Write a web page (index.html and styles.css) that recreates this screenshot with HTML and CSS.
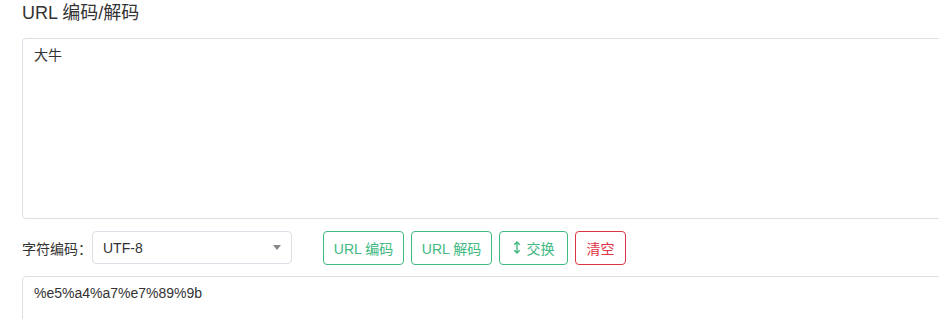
FILE: index.html
```html
<!DOCTYPE html>
<html>
<head>
    <title>URL 编码/解码</title>
    <link rel="stylesheet" href="styles.css">
</head>
<body>
    <div class="tool">
        <h2 class="title">URL 编码/解码</h2>
        <textarea class="box box-input" id="src">大牛</textarea>

        <div class="toolbar">
            <label class="label">字符编码：</label>
            <div class="select">
                <span>UTF-8</span>
                <i class="caret"></i>
            </div>
            <div class="actions">
                <button class="btn btn-wide">URL 编码</button>
                <button class="btn btn-wide">URL 解码</button>
                <button class="btn btn-swap">
                    <svg width="8" height="13" viewBox="0 0 8 13" fill="none" stroke="currentColor" stroke-width="1.4">
                        <path d="M4 1v11M1.2 3.8L4 1l2.8 2.8M1.2 9.2L4 12l2.8-2.8"/>
                    </svg>
                    交换
                </button>
                <button class="btn btn-danger">清空</button>
            </div>
        </div>

        <textarea class="box box-output" id="dst">%e5%a4%a7%e7%89%9b</textarea>
    </div>
</body>
</html>
```

FILE: styles.css
```css
* {
    margin: 0;
    padding: 0;
    box-sizing: border-box;
}

html, body {
    overflow: hidden;
}

body {
    background: #fff;
    color: #333;
    font-family: "Liberation Sans", "Noto Sans CJK SC", sans-serif;
    font-size: 14px;
}

.tool {
    padding: 0 0 0 22px;
    width: 939px;
    height: 319px;
    overflow: hidden;
}

.title {
    font-size: 18px;
    font-weight: normal;
    color: #333;
    line-height: 24px;
    margin: 1px 0 13px;
}

.box {
    display: block;
    width: 940px;
    border: 1px solid #dcdfe6;
    border-radius: 4px;
    padding: 6px 11px;
    font-family: inherit;
    font-size: 14px;
    line-height: 20px;
    color: #333;
    resize: none;
    outline: none;
}

.box-input {
    height: 181px;
}

.box-output {
    height: 80px;
}

.toolbar {
    display: flex;
    align-items: center;
    height: 33px;
    margin: 12px 0 12px;
}

.label {
    color: #333;
    width: 70px;
}

.select {
    width: 200px;
    height: 33px;
    border: 1px solid #dcdfe6;
    border-radius: 4px;
    display: flex;
    align-items: center;
    justify-content: space-between;
    padding: 0 10px;
}

.caret {
    width: 0;
    height: 0;
    border-left: 4px solid transparent;
    border-right: 4px solid transparent;
    border-top: 5px solid #888;
}

.actions {
    display: flex;
    gap: 7px;
    margin-left: 31px;
}

.btn {
    height: 34px;
    width: 51px;
    background: #fff;
    border: 1px solid #42b983;
    border-radius: 4px;
    color: #42b983;
    font-family: inherit;
    font-size: 14px;
    display: flex;
    align-items: center;
    justify-content: center;
    gap: 6px;
    cursor: pointer;
}

.btn-wide {
    width: 81px;
}

.btn-swap {
    width: 69px;
}

.btn-danger {
    border-color: #dc3545;
    color: #dc3545;
}
```
